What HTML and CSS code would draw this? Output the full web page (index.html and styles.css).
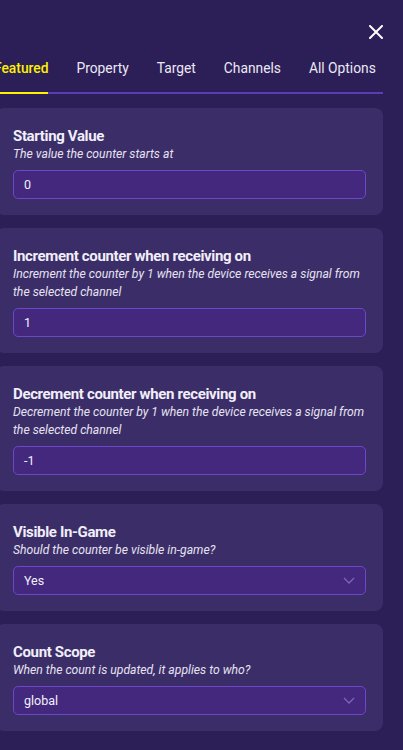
FILE: index.html
```html
<!DOCTYPE html>
<html lang="en">
<head>
  <meta charset="UTF-8" />
  <title>Counter Options</title>
  <link rel="stylesheet" href="styles.css">
</head>
<body>
  <div class="panel">
    <div class="top">
      <svg class="close" width="14" height="14" viewBox="0 0 14 14">
        <path d="M1 1L13 13M13 1L1 13" stroke="#fff" stroke-width="2" stroke-linecap="round"/>
      </svg>
    </div>

    <div class="tabs">
      <div class="tab active">Featured</div>
      <div class="tab">Property</div>
      <div class="tab">Target</div>
      <div class="tab">Channels</div>
      <div class="tab">All Options</div>
    </div>

    <div class="cards">
      <div class="card">
        <div class="title">Starting Value</div>
        <div class="desc">The value the counter starts at</div>
        <div class="field">0</div>
      </div>

      <div class="card">
        <div class="title">Increment counter when receiving on</div>
        <div class="desc">Increment the counter by 1 when the device receives a signal from the selected channel</div>
        <div class="field">1</div>
      </div>

      <div class="card">
        <div class="title">Decrement counter when receiving on</div>
        <div class="desc">Decrement the counter by 1 when the device receives a signal from the selected channel</div>
        <div class="field">-1</div>
      </div>

      <div class="card">
        <div class="title">Visible In-Game</div>
        <div class="desc">Should the counter be visible in-game?</div>
        <div class="field select">
          <span>Yes</span>
          <svg width="12" height="7" viewBox="0 0 12 7"><path d="M1 1L6 6L11 1" fill="none" stroke="#7c66bd" stroke-width="1.3"/></svg>
        </div>
      </div>

      <div class="card">
        <div class="title">Count Scope</div>
        <div class="desc">When the count is updated, it applies to who?</div>
        <div class="field select">
          <span>global</span>
          <svg width="12" height="7" viewBox="0 0 12 7"><path d="M1 1L6 6L11 1" fill="none" stroke="#7c66bd" stroke-width="1.3"/></svg>
        </div>
      </div>
    </div>
  </div>
</body>
</html>
```

FILE: styles.css
```css
body { margin: 0; padding: 0; background: #2c1f57; font-family: Roboto, "Noto Sans", sans-serif; color: #f1eef9; overflow: hidden; }
.panel { width: 387px; margin-left: -4px; }
.top { display: flex; justify-content: flex-end; padding-top: 25px; }
.close { display: block; }
.tabs { display: flex; gap: 28px; margin-top: 19px; border-bottom: 2px solid #5a3db5; white-space: nowrap; }
.tab { font-size: 13.8px; line-height: 20px; padding-bottom: 14px; color: #ebe8f5; margin-bottom: -2px; border-bottom: 2px solid transparent; }
.tab.active { color: #fff200; border-bottom-color: #fff200; font-weight: 500; margin-left: -2px; }
.cards { display: flex; flex-direction: column; gap: 13.5px; margin-top: 14px; }
.card { background: #3b2e68; border-radius: 8px; padding: 19px 17px 16px 17px; }
.title { font-size: 15px; font-weight: 700; line-height: 18px; letter-spacing: -0.35px; }
.desc { font-size: 12.2px; font-style: italic; line-height: 18px; color: #e6e2f2; }
.field { margin-top: 6.5px; height: 27px; border: 1px solid #6a48c9; border-radius: 5px; background: #43287d; font-size: 12.5px; line-height: 27px; padding: 0 10px; color: #f2f0fa; }
.select { display: flex; align-items: center; justify-content: space-between; }
.select svg { display: block; }
```
